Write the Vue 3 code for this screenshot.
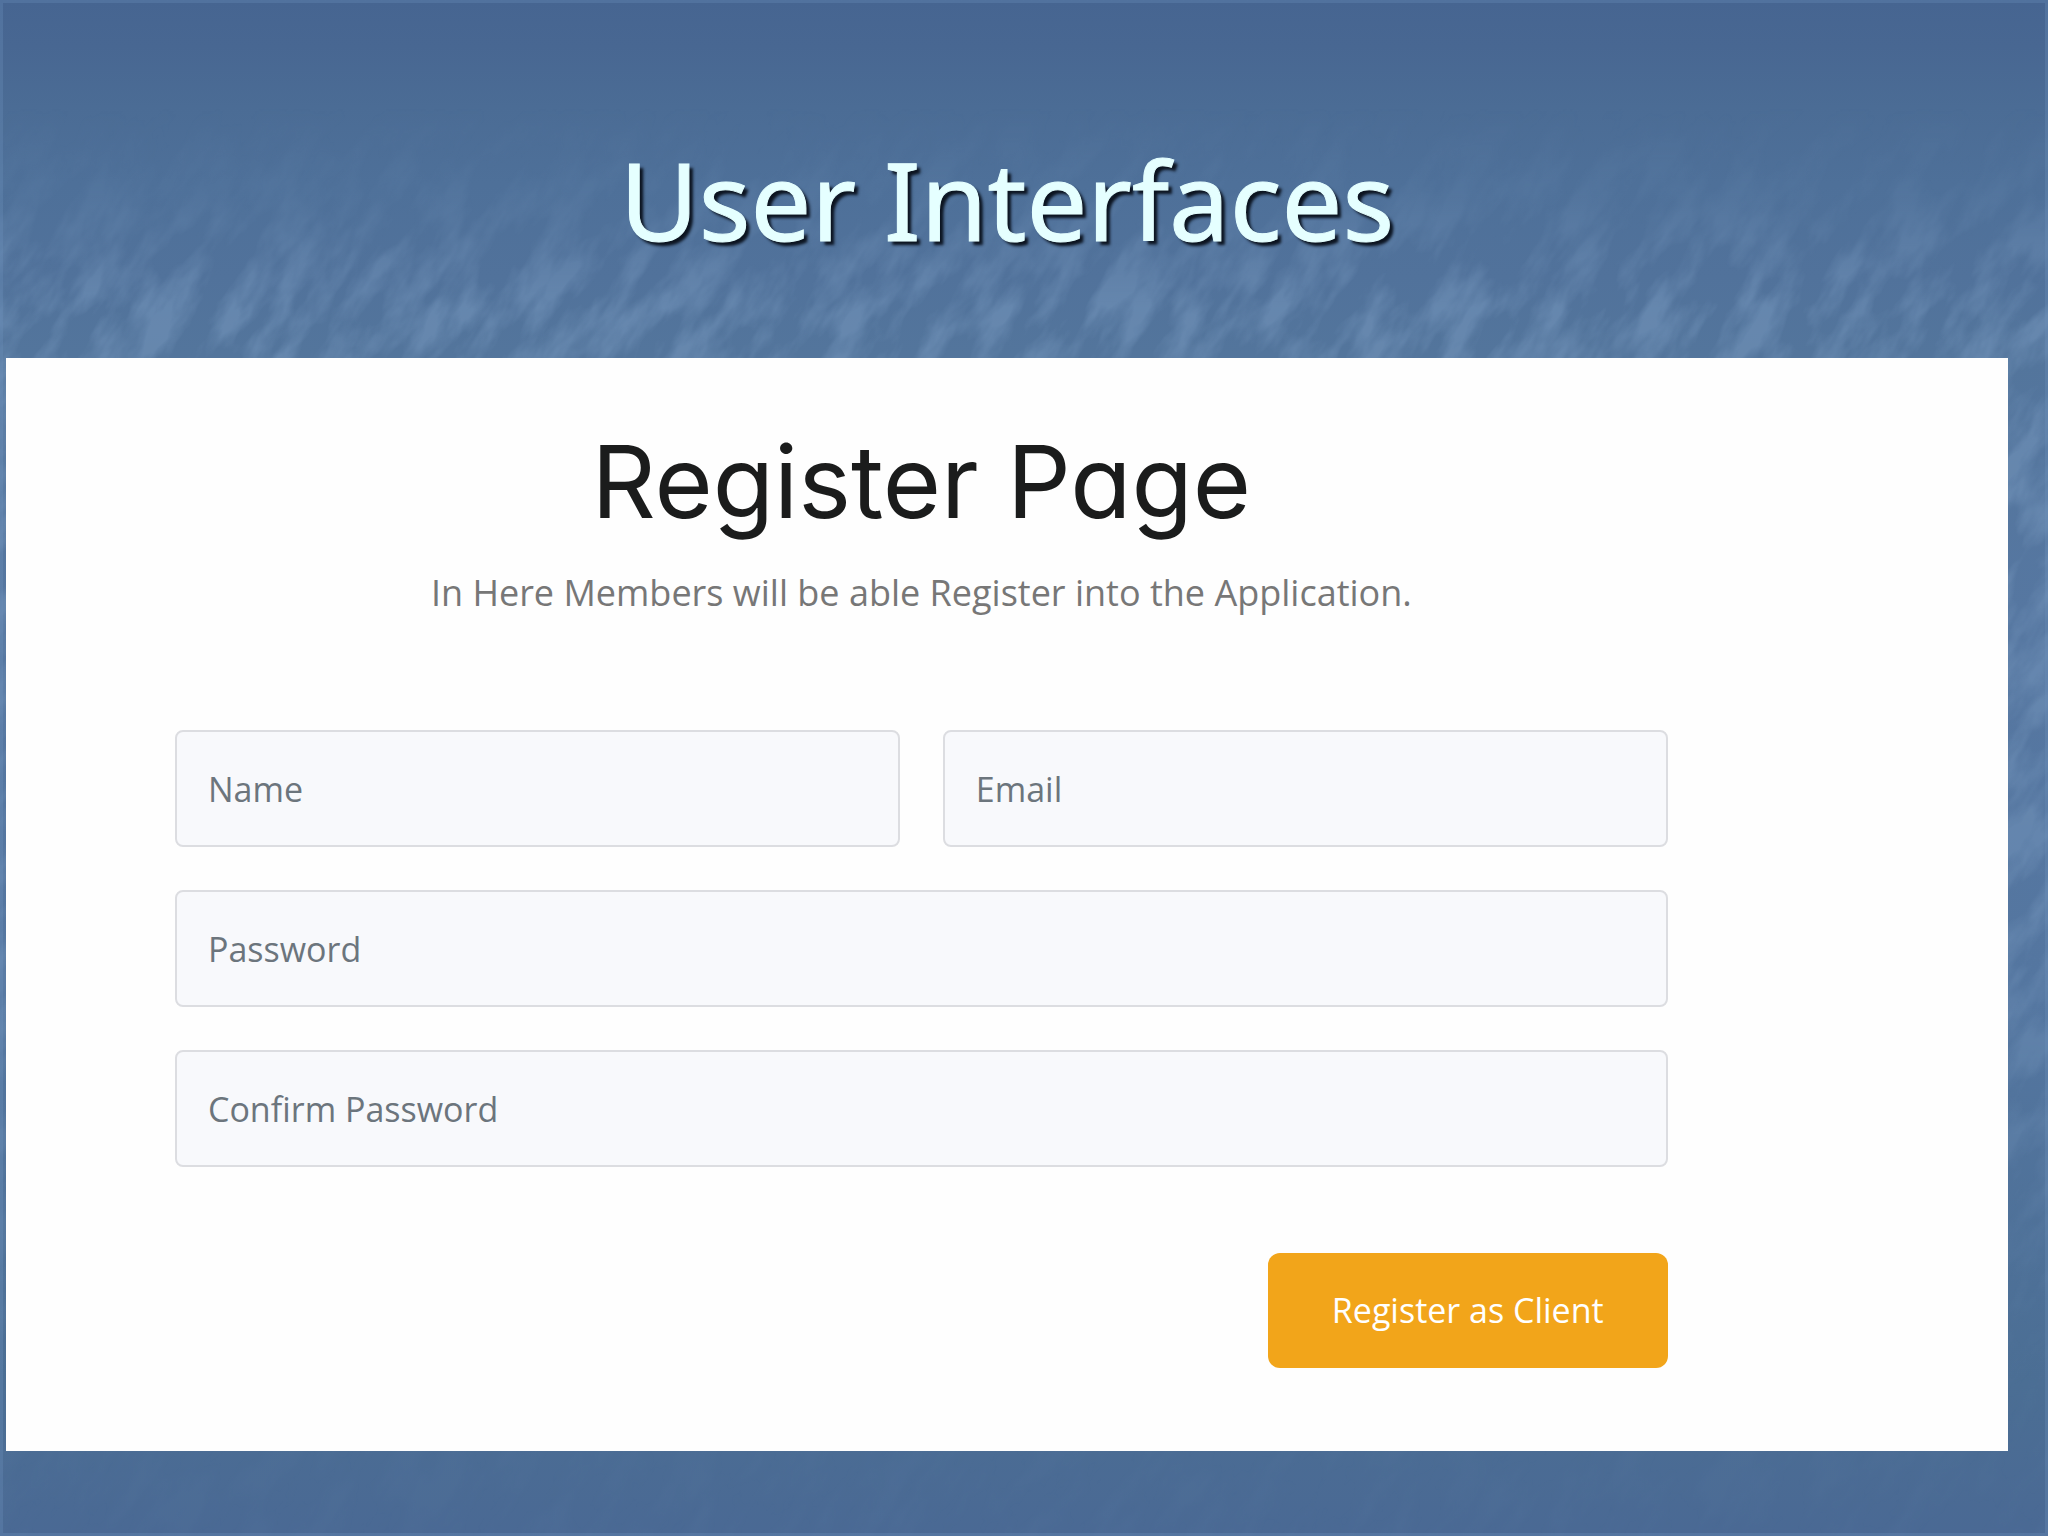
<script setup>
import { reactive } from 'vue'

const form = reactive({ name: '', email: '', password: '', confirm: '' })
</script>

<template>
  <div class="slide">
    <svg class="texture" aria-hidden="true" preserveAspectRatio="none">
      <defs>
        <filter id="strokes" x="0" y="0" width="100%" height="100%" color-interpolation-filters="sRGB">
          <feTurbulence type="fractalNoise" baseFrequency="0.013 0.034" numOctaves="4" seed="12" />
          <feColorMatrix values="0 0 0 0 0.45  0 0 0 0 0.58  0 0 0 0 0.73  3 0 0 0 -1.15" />
        </filter>
        <linearGradient id="fade" x1="0" y1="0" x2="0" y2="1">
          <stop offset="0.07" stop-color="#fff" stop-opacity="0" />
          <stop offset="0.13" stop-color="#fff" stop-opacity="0.15" />
          <stop offset="0.2" stop-color="#fff" stop-opacity="0.6" />
          <stop offset="0.6" stop-color="#fff" stop-opacity="0.5" />
          <stop offset="0.9" stop-color="#fff" stop-opacity="0.05" />
        </linearGradient>
        <mask id="water"><rect width="100%" height="100%" fill="url(#fade)" /></mask>
      </defs>
      <g mask="url(#water)">
        <rect x="-1200" y="-1200" width="4400" height="3600" filter="url(#strokes)" transform="rotate(-58 1024 600)" />
      </g>
    </svg>

    <h1 class="slide-title">User Interfaces</h1>

    <main class="panel">
      <form class="register" @submit.prevent>
        <h2>Register Page</h2>
        <p>In Here Members will be able Register into the Application.</p>
        <div class="fields">
          <input v-model="form.name" type="text" placeholder="Name" aria-label="Name" />
          <input v-model="form.email" type="email" placeholder="Email" aria-label="Email" />
          <input v-model="form.password" class="wide" type="password" placeholder="Password" aria-label="Password" />
          <input v-model="form.confirm" class="wide" type="password" placeholder="Confirm Password" aria-label="Confirm Password" />
        </div>
        <button type="submit">Register as Client</button>
      </form>
    </main>
  </div>
</template>

<style>
body {
  margin: 0;
}
</style>

<style scoped>
.slide {
  position: relative;
  box-sizing: border-box;
  min-height: 100vh;
  overflow: hidden;
  padding: 0 40px 85px 6px;
  background: linear-gradient(#466591 0%, #486792 3%, #4b6c95 7%, #4e7099 12%, #51729b 18%, #53759c 23%, #5677a1 40%, #5476a0 65%, #4b6e94 90%, #4a6994 100%);
  font-family: "Open Sans", "Noto Sans", sans-serif;
}

.slide::after {
  content: "";
  position: absolute;
  inset: 0;
  border: 3px solid rgba(110, 146, 190, 0.3);
  pointer-events: none;
}

.texture {
  position: absolute;
  inset: 0;
  width: 100%;
  height: 100%;
}

.slide-title {
  position: relative;
  margin: 0;
  padding: 120px 0 78px;
  color: #e5ffff;
  font: 400 108px/160px "Noto Sans", sans-serif;
  text-align: center;
  text-shadow: 4px 4px 3px #0c1420;
  -webkit-text-stroke: 1px #e5ffff;
}

.panel {
  position: relative;
  padding: 74px 17% 83px 169px;
  background: #fefefe;
}

.register {
  display: flex;
  flex-direction: column;
}

h2 {
  margin: 0;
  color: #1b1c1c;
  font: 400 100px/100px Inter, sans-serif;
  font-feature-settings: "cv11";
  text-align: center;
}

p {
  margin: 36px 0 112px;
  color: #777;
  font-size: 36px;
  line-height: 50px;
  text-align: center;
}

.fields {
  display: grid;
  grid-template-columns: 1fr 1fr;
  gap: 43px;
}

input {
  box-sizing: border-box;
  width: 100%;
  min-width: 0;
  height: 117px;
  padding: 0 31px;
  border: 2px solid #dcdde1;
  border-radius: 8px;
  background: #f8f9fc;
  color: #6c757d;
  font: 400 34px/50px "Open Sans", sans-serif;
}

input::placeholder {
  color: #6c757d;
  opacity: 1;
}

.wide {
  grid-column: 1 / -1;
}

button {
  align-self: flex-end;
  height: 115px;
  margin-top: 86px;
  padding: 0 64px 2px;
  border: 0;
  border-radius: 12px;
  background: #f2a51a;
  color: #fff;
  font: 400 34px/50px "Open Sans", sans-serif;
}
</style>
